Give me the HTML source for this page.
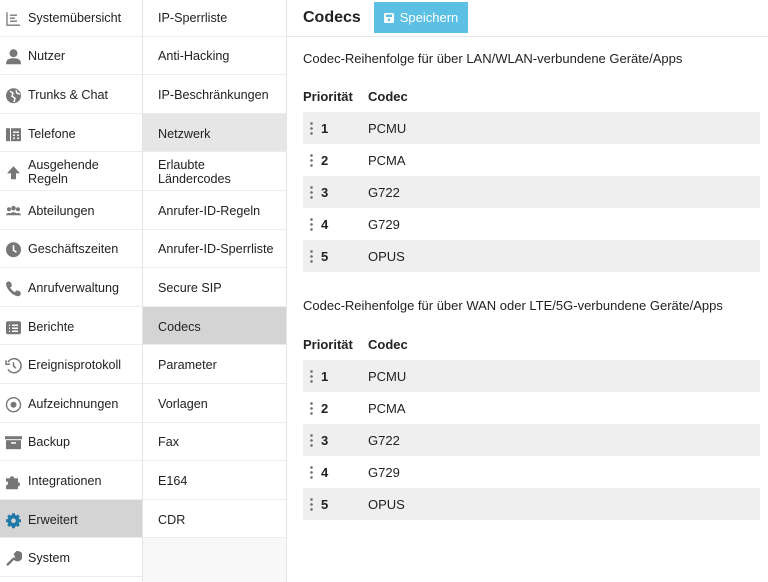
<!DOCTYPE html>
<html><head><meta charset="utf-8"><style>
*{box-sizing:border-box;margin:0;padding:0}
body{width:768px;height:582px;overflow:hidden;background:#fff;font-family:"Liberation Sans",sans-serif;font-size:13px;color:#222;position:relative}
.c1{position:absolute;left:0;top:0;width:143px;height:582px;border-right:1px solid #e4e4e4}
.c2{position:absolute;left:143px;top:0;width:144px;height:582px;border-right:1px solid #e4e4e4;background:#f8f8f8}
.r{position:absolute;left:0;right:0;height:38.6px;border-bottom:1.5px solid #ececec;display:flex;align-items:center;background:#fff;line-height:14px;padding-top:2px}
.c1 .r{padding-left:28px;font-size:12.6px}
.c2 .r{padding-left:15px;font-size:12.6px}
.ic{position:absolute;left:5px;top:50%;transform:translateY(-40%);width:17px;height:17px}
.main{position:absolute;left:287px;top:0;right:0;height:582px}
.hdr{height:37px;border-bottom:1px solid #e8e8e8;position:relative}
.hdr h1{position:absolute;left:16px;top:9px;font-size:16px;font-weight:bold;color:#222}
.btn{position:absolute;left:87px;top:2px;width:94px;height:31px;background:#5bc0e3;color:#fff;font-size:13px;display:flex;align-items:center;justify-content:center;gap:6px}
.sub{position:absolute;left:16px;font-size:13px}
.th{position:absolute;left:16px;font-weight:bold;font-size:13px}
.th span{position:absolute;left:65px;top:0}
.tbl{position:absolute;left:16px;width:457px}
.tr{height:32px;position:relative;display:flex;align-items:center}
.tr:nth-child(odd){background:#efefef}
.tr b{position:absolute;left:18px}
.tr span{position:absolute;left:65px}
.dots{position:absolute;left:7px;top:9px;width:3px;height:14px;background:radial-gradient(circle,#777 1.2px,transparent 1.5px) 0 0/3px 5px repeat-y}
</style></head><body>
<div class="c1">
<div class="r" style="top:-2px"><svg class="ic" viewBox="0 0 17 17"><path d="M2 2v13h13M5 5h7M5 8h5M5 11h7" stroke="#777" stroke-width="1.3" fill="none"/></svg>Systemübersicht</div>
<div class="r" style="top:36.6px"><svg class="ic" viewBox="0 0 17 17"><circle cx="8.5" cy="5" r="4" fill="#777"/><path d="M1 16c0-5 3-6 7.5-6s7.5 1 7.5 6z" fill="#777"/></svg>Nutzer</div>
<div class="r" style="top:75.2px"><svg class="ic" viewBox="0 0 17 17"><circle cx="8.5" cy="8.5" r="7.5" fill="#777"/><path d="M5 4l3 2-1 3 3 2-1 4M11 3l1 3 3 1" stroke="#fff" stroke-width="1.5" fill="none"/></svg>Trunks &amp; Chat</div>
<div class="r" style="top:113.8px"><svg class="ic" viewBox="0 0 17 17"><rect x="1" y="2" width="4" height="13" fill="#777"/><rect x="6" y="2" width="10" height="13" fill="#777"/><path d="M8 6h6M8 9h2M12 9h2M8 12h2M12 12h2" stroke="#fff" stroke-width="1.4"/></svg>Telefone</div>
<div class="r" style="top:152.4px"><svg class="ic" viewBox="0 0 17 17"><path d="M8.5 2L2 9h4v6h5V9h4z" fill="#777"/></svg>Ausgehende<br>Regeln</div>
<div class="r" style="top:191px"><svg class="ic" viewBox="0 0 17 17"><circle cx="4" cy="6" r="2" fill="#777"/><circle cx="8.5" cy="5" r="2.3" fill="#777"/><circle cx="13" cy="6" r="2" fill="#777"/><path d="M1 12c0-3 6-3 6 0zM5 12c0-4 7-4 7 0zM10 12c0-3 6-3 6 0z" fill="#777"/></svg>Abteilungen</div>
<div class="r" style="top:229.6px"><svg class="ic" viewBox="0 0 17 17"><circle cx="8.5" cy="8.5" r="7.5" fill="#777"/><path d="M8.5 4v5l3 2" stroke="#fff" stroke-width="1.6" fill="none"/></svg>Geschäftszeiten</div>
<div class="r" style="top:268.2px"><svg class="ic" viewBox="0 0 17 17"><path d="M3 1l3 1 1 4-2 1c1 2 3 4 5 5l1-2 4 1 1 3-2 2C8 16 1 9 1 3z" fill="#777"/></svg>Anrufverwaltung</div>
<div class="r" style="top:306.8px"><svg class="ic" viewBox="0 0 17 17"><rect x="1" y="2" width="15" height="13" rx="2" fill="#777"/><path d="M4 6h1M4 9h1M4 12h1M7 6h6M7 9h6M7 12h6" stroke="#fff" stroke-width="1.5"/></svg>Berichte</div>
<div class="r" style="top:345.4px"><svg class="ic" viewBox="0 0 17 17"><path d="M3 5a7 7 0 1 1 0 7M8.5 5v4l2.5 2M1 3v4h4" stroke="#777" stroke-width="1.5" fill="none"/></svg>Ereignisprotokoll</div>
<div class="r" style="top:384px"><svg class="ic" viewBox="0 0 17 17"><circle cx="8.5" cy="8.5" r="7" stroke="#777" stroke-width="1.4" fill="none"/><circle cx="8.5" cy="8.5" r="3" fill="#777"/></svg>Aufzeichnungen</div>
<div class="r" style="top:422.6px"><svg class="ic" viewBox="0 0 17 17"><rect x="0" y="2" width="17" height="3" fill="#777"/><rect x="1" y="6" width="15" height="9" fill="#777"/><rect x="6" y="8" width="5" height="1.5" fill="#fff"/></svg>Backup</div>
<div class="r" style="top:461.2px"><svg class="ic" viewBox="0 0 17 17"><path d="M1 5h4a2 2 0 1 1 4 0h4v4a2 2 0 1 1 0 4v3H1v-4a2 2 0 1 0 0-4z" fill="#777"/></svg>Integrationen</div>
<div class="r" style="top:499.8px;background:#d4d4d4"><svg class="ic" viewBox="0 0 17 17"><circle cx="8.5" cy="8.5" r="6" fill="#1f7aa8"/><path d="M8.5 1v15M1 8.5h15M3.2 3.2l10.6 10.6M13.8 3.2L3.2 13.8" stroke="#1f7aa8" stroke-width="3"/><circle cx="8.5" cy="8.5" r="2.3" fill="#d4d4d4"/></svg>Erweitert</div>
<div class="r" style="top:538.4px"><svg class="ic" viewBox="0 0 17 17"><path d="M2 15l7-7M9 8a4 4 0 1 0 3-6l-2 2 1 2 2 1 2-2a4 4 0 0 1-6 3" stroke="#777" stroke-width="2.4" fill="#777"/></svg>System</div>
</div>
<div class="c2">
<div class="r" style="top:-2px">IP-Sperrliste</div>
<div class="r" style="top:36.6px">Anti-Hacking</div>
<div class="r" style="top:75.2px">IP-Beschränkungen</div>
<div class="r" style="top:113.8px;background:#e6e6e6">Netzwerk</div>
<div class="r" style="top:152.4px">Erlaubte<br>Ländercodes</div>
<div class="r" style="top:191px">Anrufer-ID-Regeln</div>
<div class="r" style="top:229.6px">Anrufer-ID-Sperrliste</div>
<div class="r" style="top:268.2px">Secure SIP</div>
<div class="r" style="top:306.8px;background:#d4d4d4">Codecs</div>
<div class="r" style="top:345.4px">Parameter</div>
<div class="r" style="top:384px">Vorlagen</div>
<div class="r" style="top:422.6px">Fax</div>
<div class="r" style="top:461.2px">E164</div>
<div class="r" style="top:499.8px">CDR</div>
</div>
<div class="main">
<div class="hdr"><h1>Codecs</h1><div class="btn"><svg width="10" height="10" viewBox="0 0 10 10"><rect width="10" height="10" rx="1.5" fill="#fff"/><rect x="2" y="1.5" width="6" height="2.5" fill="#5bc0e3"/><circle cx="5" cy="6.8" r="1.3" fill="#5bc0e3"/></svg>Speichern</div></div>
<div class="sub" style="top:51px">Codec-Reihenfolge für über LAN/WLAN-verbundene Geräte/Apps</div>
<div class="th" style="top:89px">Priorität<span>Codec</span></div>
<div class="tbl" style="top:112px">
<div class="tr"><i class="dots"></i><b>1</b><span>PCMU</span></div>
<div class="tr"><i class="dots"></i><b>2</b><span>PCMA</span></div>
<div class="tr"><i class="dots"></i><b>3</b><span>G722</span></div>
<div class="tr"><i class="dots"></i><b>4</b><span>G729</span></div>
<div class="tr"><i class="dots"></i><b>5</b><span>OPUS</span></div>
</div>
<div class="sub" style="top:298px">Codec-Reihenfolge für über WAN oder LTE/5G-verbundene Geräte/Apps</div>
<div class="th" style="top:337px">Priorität<span>Codec</span></div>
<div class="tbl" style="top:360px">
<div class="tr"><i class="dots"></i><b>1</b><span>PCMU</span></div>
<div class="tr"><i class="dots"></i><b>2</b><span>PCMA</span></div>
<div class="tr"><i class="dots"></i><b>3</b><span>G722</span></div>
<div class="tr"><i class="dots"></i><b>4</b><span>G729</span></div>
<div class="tr"><i class="dots"></i><b>5</b><span>OPUS</span></div>
</div>
</div>
</body></html>
